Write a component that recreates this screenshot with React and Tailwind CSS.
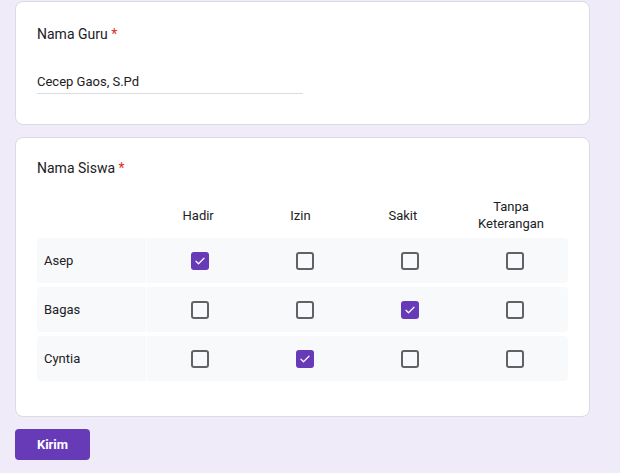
import React, { useState } from "react";

const columns = ["Hadir", "Izin", "Sakit", "Tanpa Keterangan"];

const initialRows = [
  { name: "Asep", value: "Hadir" },
  { name: "Bagas", value: "Sakit" },
  { name: "Cyntia", value: "Izin" },
];

const Checkbox = ({ checked, onClick }) => (
  <button
    type="button"
    onClick={onClick}
    className={
      checked
        ? "w-[18px] h-[18px] rounded-[3px] bg-[#673ab7] flex items-center justify-center"
        : "w-[18px] h-[18px] rounded-[3px] border-2 border-[#5f6368] bg-transparent"
    }
  >
    {checked && (
      <svg width="12" height="12" viewBox="0 0 24 24" fill="none">
        <path
          d="M4 12.5l5 5L20 6.5"
          stroke="white"
          strokeWidth="2.4"
          strokeLinecap="round"
          strokeLinejoin="round"
        />
      </svg>
    )}
  </button>
);

const App = () => {
  const [rows, setRows] = useState(initialRows);

  const toggle = (i, col) => {
    setRows(rows.map((r, idx) => (idx === i ? { ...r, value: r.value === col ? null : col } : r)));
  };

  return (
    <div
      className="min-h-[473px] bg-[#f0ebf8] pt-px pl-[15px] text-[#202124]"
      style={{ fontFamily: "Roboto, 'Liberation Sans', sans-serif" }}
    >
      <div className="w-[575px] flex flex-col gap-[12px]">
        {/* Nama Guru */}
        <div className="bg-white border border-[#dadce0] rounded-lg px-[21px] pt-[22px] pb-[30px]">
          <div className="text-[14px] leading-[20px]">
            Nama Guru <span className="text-[#d93025]">*</span>
          </div>
          <div className="mt-[28px] w-[266px] border-b border-[#dadce0] pb-px text-[13px] leading-[20px]">
            Cecep Gaos, S.Pd
          </div>
        </div>

        {/* Nama Siswa */}
        <div className="bg-white border border-[#dadce0] rounded-lg px-[21px] pt-[20px] pb-[35px]">
          <div className="text-[14px] leading-[20px]">
            Nama Siswa <span className="text-[#d93025]">*</span>
          </div>
          <div className="mt-[18px] grid grid-cols-[110px_1fr_1fr_1fr_1fr] h-[38px] items-center text-[13px] leading-[17px] text-center">
            <div />
            {columns.map((c) => (
              <div key={c} className="px-6">{c}</div>
            ))}
          </div>
          <div className="mt-[4px] flex flex-col gap-[4px]">
            {rows.map((r, i) => (
              <div
                key={r.name}
                className="grid grid-cols-[110px_1fr_1fr_1fr_1fr] h-[45px] bg-[#f8f9fa] rounded items-center text-[13px]"
              >
                <div className="h-full flex items-center pl-[7px] border-r border-white">{r.name}</div>
                {columns.map((c) => (
                  <div key={c} className="flex justify-center">
                    <Checkbox checked={r.value === c} onClick={() => toggle(i, c)} />
                  </div>
                ))}
              </div>
            ))}
          </div>
        </div>

        <div>
          <button
            type="submit"
            className="w-[75px] h-[31px] rounded bg-[#673ab7] text-white text-[13px] font-bold"
          >
            Kirim
          </button>
        </div>
      </div>
    </div>
  );
};

export default App;
